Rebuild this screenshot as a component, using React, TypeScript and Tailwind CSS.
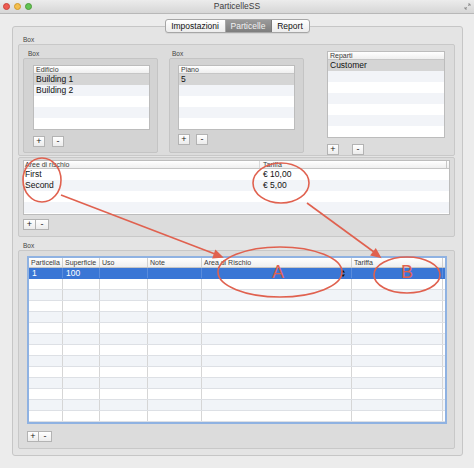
import React from 'react'

// Finestra "ParticelleSS" con tab Particelle e annotazioni rosse sovrapposte.

type ListProps = {
  header: string
  items: string[]
  selected?: number
  rows: number
  className: string
}

function ListBox({ header, items, selected = -1, rows, className }: ListProps) {
  const list = Array.from({ length: rows }, (_, i) => items[i] ?? '')
  return (
    <div className={['flex flex-col overflow-hidden border border-[#bcbcbc] bg-white', className].join(' ')}>
      <div className="flex h-[8px] shrink-0 items-center border-b border-[#c6c6c6] bg-gradient-to-b from-white to-[#efefef] px-[2px] text-[7px] leading-none text-[#3a3a3a]">
        {header}
      </div>
      {list.map((r, i) => (
        <div
          key={i}
          className={[
            'flex h-[11px] shrink-0 items-center px-[2px] text-[8.5px] leading-none text-[#111]',
            i === selected ? 'bg-[#d5d5d5]' : i % 2 === 1 ? 'bg-[#f2f4f8]' : 'bg-white',
          ].join(' ')}
        >
          {r}
        </div>
      ))}
    </div>
  )
}

function SmallBtn({ label, className = '' }: { label: string; className?: string }) {
  return (
    <div
      className={[
        'flex h-[11px] w-[12px] items-center justify-center border border-[#b3b3b3] bg-gradient-to-b from-white to-[#ececec] text-[9px] leading-none text-[#222]',
        className,
      ].join(' ')}
    >
      {label}
    </div>
  )
}

const cols = [
  { name: 'Particella', w: 'w-[34px]' },
  { name: 'Superficie', w: 'w-[37px]' },
  { name: 'Uso', w: 'w-[48px]' },
  { name: 'Note', w: 'w-[54px]' },
  { name: 'Area di Rischio', w: 'w-[150px]' },
  { name: 'Tariffa', w: 'w-[91px]' },
]

export default function App() {
  const aree = [
    ['First', '€ 10,00'],
    ['Second', '€ 5,00'],
    ['', ''],
    ['', ''],
  ]
  const particelle = Array.from({ length: 15 }, (_, i) => (i === 0 ? ['1', '100', '', '', '', ''] : ['', '', '', '', '', '']))

  return (
    <div className="relative flex h-[468px] w-[474px] flex-col overflow-hidden bg-[#ececec] font-['Liberation_Sans',Arial,sans-serif] text-[#1a1a1a]">
      {/* Barra del titolo */}
      <div className="grid h-[14px] shrink-0 grid-cols-[1fr_auto_1fr] items-center border-b border-[#b8b8b8] bg-gradient-to-b from-[#ececec] to-[#d6d6d6]">
        <div className="flex items-center gap-[4px] pl-[3px]">
          <span className="h-[7px] w-[7px] rounded-full border border-[#c9423a] bg-[#ee5b52]" />
          <span className="h-[7px] w-[7px] rounded-full border border-[#d19a2a] bg-[#f4bf4f]" />
          <span className="h-[7px] w-[7px] rounded-full border border-[#4e9a3a] bg-[#62c554]" />
        </div>
        <span className="text-[8.5px] leading-none text-[#3c3c3c]">ParticelleSS</span>
        <div className="flex justify-end pr-[3px]">
          <svg width="7" height="7" viewBox="0 0 7 7" fill="none" stroke="#8a8a8a" strokeWidth="0.9">
            <path d="M4 1h2v2M6 1L4.2 2.8M3 6H1V4M1 6l1.8-1.8" />
          </svg>
        </div>
      </div>

      {/* Tab */}
      <div className="relative z-10 mt-[5px] flex justify-center">
        <div className="flex h-[14px] overflow-hidden rounded-[3px] border border-[#a6a6a6] bg-gradient-to-b from-white to-[#ececec] text-[8.5px] leading-none shadow-[0_1px_0_rgba(0,0,0,0.06)]">
          <div className="flex w-[60px] items-center justify-center border-r border-[#a6a6a6] text-[#111]">Impostazioni</div>
          <div className="flex w-[46px] items-center justify-center border-r border-[#7a7a7a] bg-gradient-to-b from-[#9a9a9a] to-[#7e7e7e] text-[#f1f1f1]">
            Particelle
          </div>
          <div className="flex w-[37px] items-center justify-center text-[#111]">Report</div>
        </div>
      </div>

      {/* Pannello */}
      <div className="-mt-[7px] ml-[12px] mr-[11px] flex h-[430px] flex-col rounded-[3px] border border-[#c6c6c6] bg-[#e4e4e4] pb-[6px] pl-[5px] pr-[7px] pt-[9px]">
        <div className="h-[8px] pl-[5px] text-[6.5px] leading-[8px] text-[#444]">Box</div>

        {/* Box 1 */}
        <div className="flex h-[112px] shrink-0 rounded-[2px] border border-[#c8c8c8] bg-[#dcdcdc] pl-[4px] pt-[5px]">
          <div className="flex flex-col">
            <div className="h-[8px] pl-[5px] text-[6.5px] leading-[8px] text-[#444]">Box</div>
            <div className="flex h-[95px] w-[135px] flex-col rounded-[2px] border border-[#c4c4c4] bg-[#d3d3d3] px-[9px] pt-[6px]">
              <ListBox header="Edificio" items={['Building 1', 'Building 2']} selected={0} rows={6} className="h-[65px] w-[117px]" />
              <div className="mt-[6px] flex gap-[7px]">
                <SmallBtn label="+" />
                <SmallBtn label="-" />
              </div>
            </div>
          </div>

          <div className="ml-[11px] flex flex-col">
            <div className="h-[8px] pl-[3px] text-[6.5px] leading-[8px] text-[#444]">Box</div>
            <div className="flex h-[95px] w-[135px] flex-col rounded-[2px] border border-[#c4c4c4] bg-[#d3d3d3] px-[8px] pt-[6px]">
              <ListBox header="Piano" items={['5']} selected={0} rows={6} className="h-[65px] w-[117px]" />
              <div className="mt-[4px] flex gap-[6px]">
                <SmallBtn label="+" />
                <SmallBtn label="-" />
              </div>
            </div>
          </div>

          <div className="ml-[23px] mt-[1px] flex flex-col">
            <ListBox header="Reparti" items={['Customer']} selected={0} rows={8} className="h-[87px] w-[118px]" />
            <div className="mt-[6px] flex gap-[13px]">
              <SmallBtn label="+" />
              <SmallBtn label="-" />
            </div>
          </div>
        </div>

        {/* Aree di rischio */}
        <div className="mt-[1px] flex h-[80px] shrink-0 flex-col rounded-[2px] border border-[#c8c8c8] bg-[#dcdcdc] pl-[4px] pr-[4px] pt-[2px]">
          <div className="flex h-[55px] flex-col overflow-hidden border border-[#bcbcbc] bg-white">
            <div className="flex h-[8px] shrink-0 border-b border-[#c6c6c6] bg-gradient-to-b from-white to-[#efefef] text-[7px] leading-none text-[#3a3a3a]">
              <div className="flex w-[236px] items-center border-r border-[#dadada] pl-[1px]">Aree di rischio</div>
              <div className="flex flex-1 items-center border-r border-[#c8c8c8] pl-[3px]">Tariffa</div>
              <div className="w-[2px]" />
            </div>
            {aree.map((r, i) => (
              <div
                key={i}
                className={[
                  'flex h-[11px] shrink-0 items-center text-[8.5px] leading-none text-[#111]',
                  i % 2 === 1 ? 'bg-[#f2f4f8]' : 'bg-white',
                ].join(' ')}
              >
                <div className="w-[236px] pl-[1px]">{r[0]}</div>
                <div className="flex-1 pl-[3px]">{r[1]}</div>
              </div>
            ))}
          </div>
          <div className="mt-[4px] flex">
            <SmallBtn label="+" className="w-[13px]" />
            <SmallBtn label="-" className="w-[13px] border-l-0" />
          </div>
        </div>

        <div className="mt-[5px] h-[8px] pl-[5px] text-[6.5px] leading-[8px] text-[#444]">Box</div>

        {/* Box Particelle */}
        <div className="flex h-[199px] shrink-0 flex-col rounded-[2px] border border-[#c8c8c8] bg-[#dcdcdc] pl-[8px] pr-[7px] pt-[5px]">
          <div className="flex h-[168px] flex-col overflow-hidden border-2 border-[#8fb2e2] bg-white">
            <div className="flex h-[10px] shrink-0 border-b border-[#c6c6c6] bg-gradient-to-b from-white to-[#efefef] text-[7px] leading-none text-[#3a3a3a]">
              {cols.map((c) => (
                <div key={c.name} className={['flex shrink-0 items-center border-r border-[#d0d0d0] pl-[2px]', c.w].join(' ')}>
                  {c.name}
                </div>
              ))}
            </div>
            {particelle.map((r, i) => {
              const sel = i === 0
              return (
                <div
                  key={i}
                  className={[
                    'flex h-[11px] shrink-0 border-b text-[8.5px] leading-none',
                    sel ? 'border-[#3a76d5] bg-[#3a76d5] text-white' : i % 2 === 0 ? 'border-[#dde0e5] bg-[#f1f4f8]' : 'border-[#dde0e5] bg-white',
                  ].join(' ')}
                >
                  {cols.map((c, j) => (
                    <div
                      key={c.name}
                      className={[
                        'relative flex shrink-0 items-center border-r pl-[3px]',
                        sel ? 'border-[#5a8cdc]' : 'border-[#d6d6d6]',
                        c.w,
                      ].join(' ')}
                    >
                      {r[j]}
                      {sel && j === 4 && (
                        <svg className="absolute right-[6px] top-[2px]" width="4" height="7" viewBox="0 0 4 7" fill="#111">
                          <path d="M2 0L4 2.6H0zM2 7L0 4.4h4z" />
                        </svg>
                      )}
                    </div>
                  ))}
                </div>
              )
            })}
          </div>
          <div className="mt-[7px] flex">
            <SmallBtn label="+" className="w-[12px]" />
            <SmallBtn label="-" className="w-[13px] border-l-0" />
          </div>
        </div>
      </div>

      {/* Annotazioni rosse */}
      <svg
        className="pointer-events-none absolute inset-0"
        width="474"
        height="468"
        viewBox="0 0 474 468"
        fill="none"
        stroke="#e0614f"
        strokeWidth="1.6"
      >
        <ellipse cx="42" cy="180" rx="19" ry="22" />
        <ellipse cx="281" cy="183" rx="28" ry="20" />
        <ellipse cx="280" cy="272" rx="62" ry="25" />
        <ellipse cx="407" cy="275" rx="33" ry="18" />
        <line x1="61" y1="195" x2="215" y2="254" />
        <polygon points="222,257 213.3,257.6 215.7,251" fill="#e0614f" />
        <line x1="307" y1="203" x2="374" y2="252" />
        <polygon points="380,257 371.5,255.1 375.7,249.5" fill="#e0614f" />
        <text x="278" y="278" fill="#e0614f" stroke="none" fontSize="18" textAnchor="middle" fontFamily="Liberation Sans, Arial, sans-serif">
          A
        </text>
        <text x="407" y="278" fill="#e0614f" stroke="none" fontSize="18" textAnchor="middle" fontFamily="Liberation Sans, Arial, sans-serif">
          B
        </text>
      </svg>
    </div>
  )
}
